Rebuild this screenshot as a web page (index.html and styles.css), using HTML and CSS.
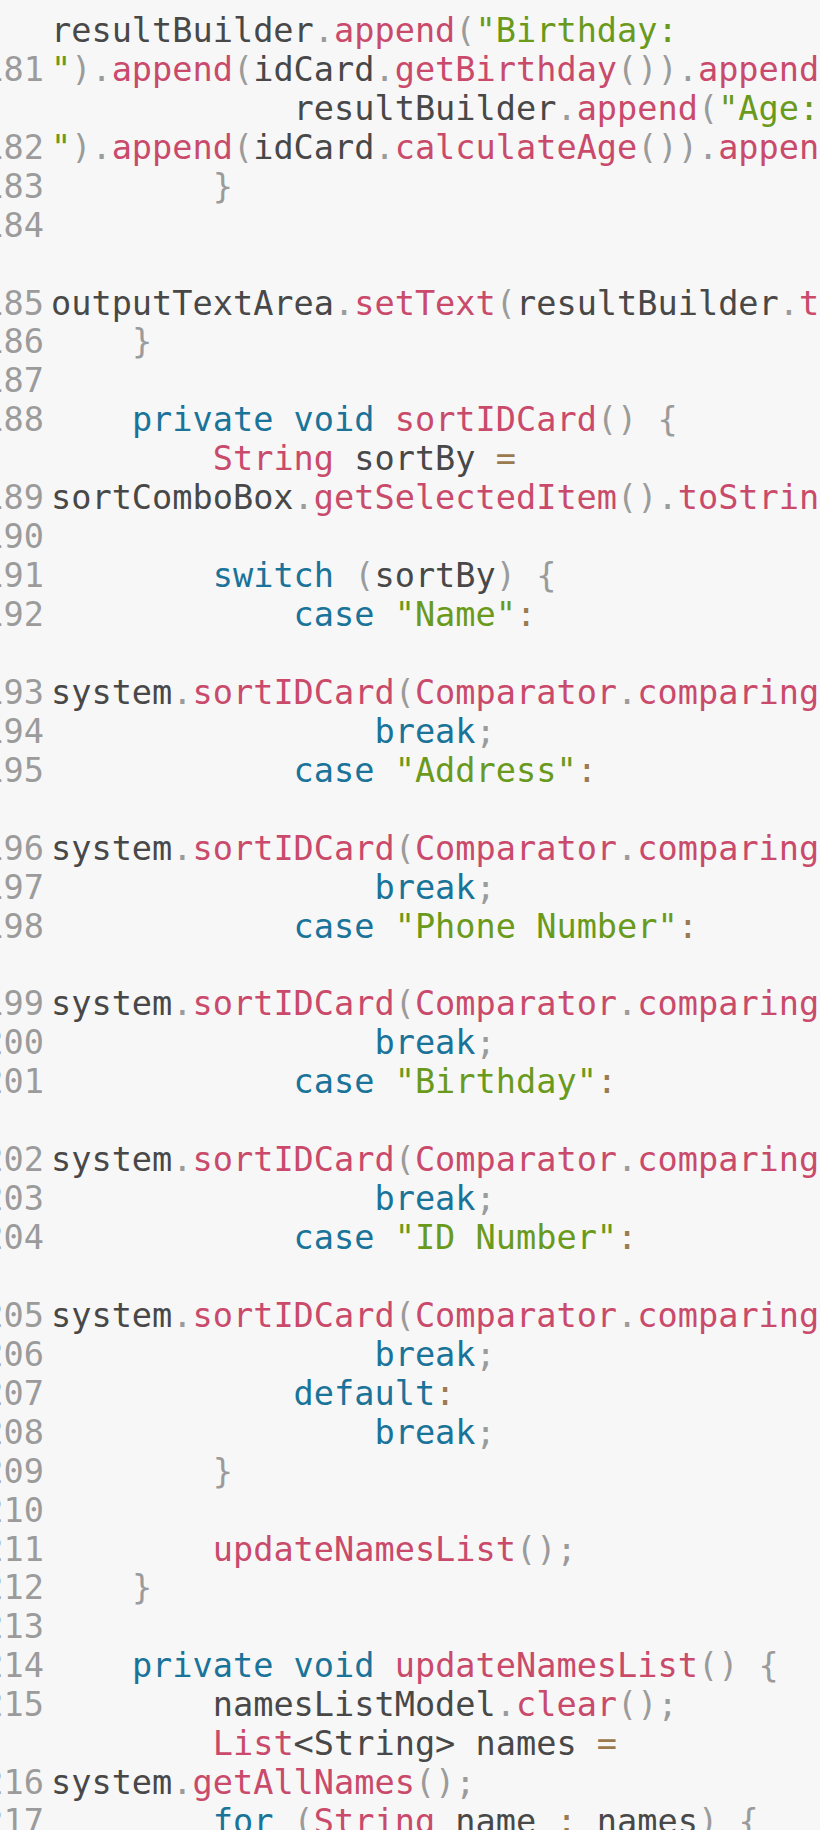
FILE: index.html
```html
<!DOCTYPE html>
<html lang="en">
<head>
<meta charset="utf-8">
<title>IDCardGUI.java</title>
<link rel="stylesheet" href="styles.css">
</head>
<body>
<main class="code">
<div class="ln"><span class="num">181</span><span class="src">            resultBuilder<span class="p">.</span><span class="f">append</span><span class="p">(</span><span class="s">"Birthday: "</span><span class="p">).</span><span class="f">append</span><span class="p">(</span>idCard<span class="p">.</span><span class="f">getBirthday</span><span class="p">()).</span><span class="f">append</span><span class="p">(</span><span class="s">"\n"</span><span class="p">);</span></span></div>
<div class="ln"><span class="num">182</span><span class="src">            resultBuilder<span class="p">.</span><span class="f">append</span><span class="p">(</span><span class="s">"Age: "</span><span class="p">).</span><span class="f">append</span><span class="p">(</span>idCard<span class="p">.</span><span class="f">calculateAge</span><span class="p">()).</span><span class="f">append</span><span class="p">(</span><span class="s">"\n"</span><span class="p">);</span></span></div>
<div class="ln"><span class="num">183</span><span class="src">        <span class="p">}</span></span></div>
<div class="ln"><span class="num">184</span><span class="src"></span></div>
<div class="ln"><span class="num">185</span><span class="src">        outputTextArea<span class="p">.</span><span class="f">setText</span><span class="p">(</span>resultBuilder<span class="p">.</span><span class="f">toString</span><span class="p">());</span></span></div>
<div class="ln"><span class="num">186</span><span class="src">    <span class="p">}</span></span></div>
<div class="ln"><span class="num">187</span><span class="src"></span></div>
<div class="ln"><span class="num">188</span><span class="src">    <span class="k">private</span> <span class="k">void</span> <span class="f">sortIDCard</span><span class="p">()</span> <span class="p">{</span></span></div>
<div class="ln"><span class="num">189</span><span class="src">        <span class="f">String</span> sortBy <span class="o">=</span> sortComboBox<span class="p">.</span><span class="f">getSelectedItem</span><span class="p">().</span><span class="f">toString</span><span class="p">();</span></span></div>
<div class="ln"><span class="num">190</span><span class="src"></span></div>
<div class="ln"><span class="num">191</span><span class="src">        <span class="k">switch</span> <span class="p">(</span>sortBy<span class="p">)</span> <span class="p">{</span></span></div>
<div class="ln"><span class="num">192</span><span class="src">            <span class="k">case</span> <span class="s">"Name"</span><span class="o">:</span></span></div>
<div class="ln"><span class="num">193</span><span class="src">                system<span class="p">.</span><span class="f">sortIDCard</span><span class="p">(</span><span class="f">Comparator</span><span class="p">.</span><span class="f">comparing</span><span class="p">(</span><span class="f">IDCard</span><span class="o">::</span>getName<span class="p">));</span></span></div>
<div class="ln"><span class="num">194</span><span class="src">                <span class="k">break</span><span class="p">;</span></span></div>
<div class="ln"><span class="num">195</span><span class="src">            <span class="k">case</span> <span class="s">"Address"</span><span class="o">:</span></span></div>
<div class="ln"><span class="num">196</span><span class="src">                system<span class="p">.</span><span class="f">sortIDCard</span><span class="p">(</span><span class="f">Comparator</span><span class="p">.</span><span class="f">comparing</span><span class="p">(</span><span class="f">IDCard</span><span class="o">::</span>getAddress<span class="p">));</span></span></div>
<div class="ln"><span class="num">197</span><span class="src">                <span class="k">break</span><span class="p">;</span></span></div>
<div class="ln"><span class="num">198</span><span class="src">            <span class="k">case</span> <span class="s">"Phone Number"</span><span class="o">:</span></span></div>
<div class="ln"><span class="num">199</span><span class="src">                system<span class="p">.</span><span class="f">sortIDCard</span><span class="p">(</span><span class="f">Comparator</span><span class="p">.</span><span class="f">comparing</span><span class="p">(</span><span class="f">IDCard</span><span class="o">::</span>getPhoneNumber<span class="p">));</span></span></div>
<div class="ln"><span class="num">200</span><span class="src">                <span class="k">break</span><span class="p">;</span></span></div>
<div class="ln"><span class="num">201</span><span class="src">            <span class="k">case</span> <span class="s">"Birthday"</span><span class="o">:</span></span></div>
<div class="ln"><span class="num">202</span><span class="src">                system<span class="p">.</span><span class="f">sortIDCard</span><span class="p">(</span><span class="f">Comparator</span><span class="p">.</span><span class="f">comparing</span><span class="p">(</span><span class="f">IDCard</span><span class="o">::</span>getBirthday<span class="p">));</span></span></div>
<div class="ln"><span class="num">203</span><span class="src">                <span class="k">break</span><span class="p">;</span></span></div>
<div class="ln"><span class="num">204</span><span class="src">            <span class="k">case</span> <span class="s">"ID Number"</span><span class="o">:</span></span></div>
<div class="ln"><span class="num">205</span><span class="src">                system<span class="p">.</span><span class="f">sortIDCard</span><span class="p">(</span><span class="f">Comparator</span><span class="p">.</span><span class="f">comparing</span><span class="p">(</span><span class="f">IDCard</span><span class="o">::</span>getIdNumber<span class="p">));</span></span></div>
<div class="ln"><span class="num">206</span><span class="src">                <span class="k">break</span><span class="p">;</span></span></div>
<div class="ln"><span class="num">207</span><span class="src">            <span class="k">default</span><span class="o">:</span></span></div>
<div class="ln"><span class="num">208</span><span class="src">                <span class="k">break</span><span class="p">;</span></span></div>
<div class="ln"><span class="num">209</span><span class="src">        <span class="p">}</span></span></div>
<div class="ln"><span class="num">210</span><span class="src"></span></div>
<div class="ln"><span class="num">211</span><span class="src">        <span class="f">updateNamesList</span><span class="p">();</span></span></div>
<div class="ln"><span class="num">212</span><span class="src">    <span class="p">}</span></span></div>
<div class="ln"><span class="num">213</span><span class="src"></span></div>
<div class="ln"><span class="num">214</span><span class="src">    <span class="k">private</span> <span class="k">void</span> <span class="f">updateNamesList</span><span class="p">()</span> <span class="p">{</span></span></div>
<div class="ln"><span class="num">215</span><span class="src">        namesListModel<span class="p">.</span><span class="f">clear</span><span class="p">();</span></span></div>
<div class="ln"><span class="num">216</span><span class="src">        <span class="f">List</span>&lt;String&gt; names <span class="o">=</span> system<span class="p">.</span><span class="f">getAllNames</span><span class="p">();</span></span></div>
<div class="ln"><span class="num">217</span><span class="src">        <span class="k">for</span> <span class="p">(</span><span class="f">String</span> name <span class="o">:</span> names<span class="p">)</span> <span class="p">{</span></span></div>
<div class="ln"><span class="num">218</span><span class="src">            namesListModel<span class="p">.</span><span class="f">addElement</span><span class="p">(</span>name<span class="p">);</span></span></div>
</main>
</body>
</html>
```
FILE: styles.css
```css
html {
  overflow: hidden;
  background: #f7f7f7;
}

body {
  margin: 0;
  background: #f7f7f7;
  color: #484848;
  font-family: "DejaVu Sans Mono", "Liberation Mono", monospace;
  font-size: 33.6px;
  line-height: 38.93px;
}

.code {
  display: block;
  margin-top: -27px;
}

.ln {
  display: flex;
  align-items: flex-end;
}

.num {
  flex: none;
  width: 44px;
  display: flex;
  justify-content: flex-end;
  color: #9b9b9b;
}

.src {
  flex: none;
  display: block;
  width: 40ch;
  margin-left: 7px;
  white-space: pre-wrap;
}

.k { color: #1a7399; }
.f { color: #c94a6b; }
.s { color: #6a9a1c; }
.p { color: #9b9b9b; }
.o { color: #9a7a4e; }
```
